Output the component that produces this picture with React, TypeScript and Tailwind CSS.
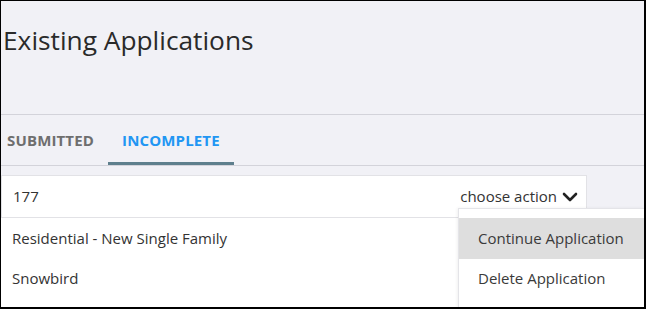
import React from "react";

const rows = ["Residential - New Single Family", "Snowbird"];
const actions = ["Continue Application", "Delete Application"];

function Chevron() {
  return (
    <svg width="16" height="10" viewBox="0 0 16 10" aria-hidden>
      <path d="M2 2 L8 8 L14 2" fill="none" stroke="#222" strokeWidth="2.6" strokeLinecap="round" strokeLinejoin="round" />
    </svg>
  );
}

export default function App() {
  return (
    <div
      className="relative h-[309px] w-[646px] overflow-hidden border-t border-l border-r-2 border-b-2 border-black bg-[#f1f1f6] text-[#333]"
      style={{ fontFamily: '"Open Sans", "Noto Sans", sans-serif' }}
    >
      <header className="h-[114px] border-b border-[#d3d3da] pt-[21px] pl-[2px]">
        <h1 className="text-[26.3px] leading-[36px] font-normal text-[#2a2a2a]">Existing Applications</h1>
      </header>

      <nav className="flex h-[51px] border-b border-[#d3d3da]">
        <button className="flex h-full items-center pl-[6px] pr-[14px] text-[15px] font-bold uppercase tracking-[0.15px] text-[#6e6e6e]">
          Submitted
        </button>
        <button className="flex h-full items-center border-b-[3px] border-[#5e7f8d] px-[14px] pt-[3px] text-[15px] font-bold uppercase tracking-[0.15px] text-[#2196f3]">
          Incomplete
        </button>
      </nav>

      <div className="mt-[9px] flex h-[43px] w-[586px] items-center justify-between border border-[#e2e2e6] bg-white pl-[11px] pr-[8px] text-[15px]">
        <span>177</span>
        <span className="flex items-center gap-[5px]">
          choose action
          <Chevron />
        </span>
      </div>

      <ul className="h-[100px] bg-white">
        {rows.map((r) => (
          <li key={r} className="flex h-[40px] items-center pl-[11px] text-[15px]">
            {r}
          </li>
        ))}
      </ul>

      <div className="absolute top-[207px] right-0 bottom-0 left-[457px] border-l border-t border-[#e4e4e8] bg-white pt-[9px] shadow-[-1px_0_3px_rgba(0,0,0,0.06)]">
        {actions.map((a, i) => (
          <div
            key={a}
            className={`flex items-center pl-[19px] text-[15px] text-[#3a3a3a] ${i === 0 ? "h-[41px] bg-[#dedede]" : "h-[38px]"}`}
          >
            {a}
          </div>
        ))}
      </div>
    </div>
  );
}
